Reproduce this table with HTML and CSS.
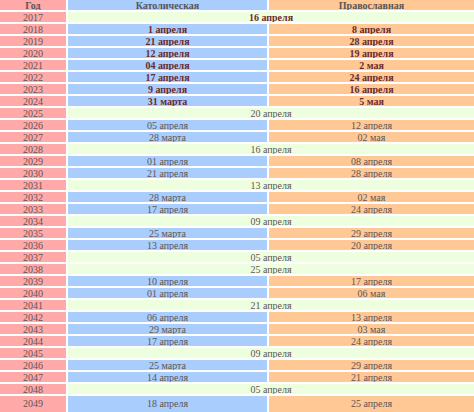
FILE: index.html
```html
<!DOCTYPE html>
<html lang="ru">
<head>
<meta charset="utf-8">
<title>Пасха</title>
<link rel="stylesheet" href="styles.css">
</head>
<body>
<div class="grid">
  <div class="c y h">Год</div><div class="c k h">Католическая</div><div class="c p h">Православная</div>
  <div class="c y">2017</div><div class="c s b">16 апреля</div>
  <div class="c y">2018</div><div class="c k b">1 апреля</div><div class="c p b">8 апреля</div>
  <div class="c y">2019</div><div class="c k b">21 апреля</div><div class="c p b">28 апреля</div>
  <div class="c y">2020</div><div class="c k b">12 апреля</div><div class="c p b">19 апреля</div>
  <div class="c y">2021</div><div class="c k b">04 апреля</div><div class="c p b">2 мая</div>
  <div class="c y">2022</div><div class="c k b">17 апреля</div><div class="c p b">24 апреля</div>
  <div class="c y">2023</div><div class="c k b">9 апреля</div><div class="c p b">16 апреля</div>
  <div class="c y">2024</div><div class="c k b">31 марта</div><div class="c p b">5 мая</div>
  <div class="c y">2025</div><div class="c s">20 апреля</div>
  <div class="c y">2026</div><div class="c k">05 апреля</div><div class="c p">12 апреля</div>
  <div class="c y">2027</div><div class="c k">28 марта</div><div class="c p">02 мая</div>
  <div class="c y">2028</div><div class="c s">16 апреля</div>
  <div class="c y">2029</div><div class="c k">01 апреля</div><div class="c p">08 апреля</div>
  <div class="c y">2030</div><div class="c k">21 апреля</div><div class="c p">28 апреля</div>
  <div class="c y">2031</div><div class="c s">13 апреля</div>
  <div class="c y">2032</div><div class="c k">28 марта</div><div class="c p">02 мая</div>
  <div class="c y">2033</div><div class="c k">17 апреля</div><div class="c p">24 апреля</div>
  <div class="c y">2034</div><div class="c s">09 апреля</div>
  <div class="c y">2035</div><div class="c k">25 марта</div><div class="c p">29 апреля</div>
  <div class="c y">2036</div><div class="c k">13 апреля</div><div class="c p">20 апреля</div>
  <div class="c y">2037</div><div class="c s">05 апреля</div>
  <div class="c y">2038</div><div class="c s">25 апреля</div>
  <div class="c y">2039</div><div class="c k">10 апреля</div><div class="c p">17 апреля</div>
  <div class="c y">2040</div><div class="c k">01 апреля</div><div class="c p">06 мая</div>
  <div class="c y">2041</div><div class="c s">21 апреля</div>
  <div class="c y">2042</div><div class="c k">06 апреля</div><div class="c p">13 апреля</div>
  <div class="c y">2043</div><div class="c k">29 марта</div><div class="c p">03 мая</div>
  <div class="c y">2044</div><div class="c k">17 апреля</div><div class="c p">24 апреля</div>
  <div class="c y">2045</div><div class="c s">09 апреля</div>
  <div class="c y">2046</div><div class="c k">25 марта</div><div class="c p">29 апреля</div>
  <div class="c y">2047</div><div class="c k">14 апреля</div><div class="c p">21 апреля</div>
  <div class="c y">2048</div><div class="c s">05 апреля</div>
  <div class="c y last">2049</div><div class="c k last">18 апреля</div><div class="c p last">25 апреля</div>
</div>
</body>
</html>
```
FILE: styles.css
```css
html, body {
  margin: 0;
  padding: 0;
  background: #ffffff;
}
.grid {
  display: grid;
  grid-template-columns: 66px 199px 205px;
  grid-template-rows: repeat(33, 10px) 16px;
  column-gap: 2px;
  row-gap: 2px;
  font-family: "Liberation Serif", "DejaVu Serif", serif;
  font-size: 10px;
  color: #5e5656;
}
.c {
  line-height: 11px;
  text-align: center;
  white-space: nowrap;
  overflow: hidden;
}
.y { background: #ffa9a9; }
.k { background: #a9cdfd; }
.p { background: #ffc895; }
.s { background: #eeffe0; grid-column: span 2; }
.h { font-weight: bold; color: #5a5555; }
.b { font-weight: bold; color: #6a2a2a; }
.last { line-height: 15px; }
```
